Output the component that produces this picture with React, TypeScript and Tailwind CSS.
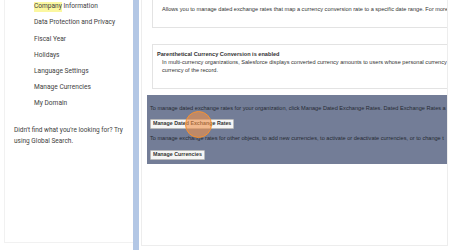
import React from "react"

const items = [
  "Company Information",
  "Data Protection and Privacy",
  "Fiscal Year",
  "Holidays",
  "Language Settings",
  "Manage Currencies",
  "My Domain",
]

function Sidebar() {
  return (
    <div className="w-[133px] h-full pl-[4px] pt-0 pb-[6px] bg-white">
      <div className="h-full bg-white border-l border-b border-[#f1f1f1] font-['Roboto',sans-serif] text-[#3e3e3e]">
        <div className="-mt-[1px] pl-[29px]">
          {items.map((it, i) => (
            <div key={it} className="h-[16.2px] flex items-center text-[6.6px] whitespace-nowrap">
              {i === 0 ? (
                <>
                  <span className="bg-[#fbf7a0]">Company</span>
                  <span>&nbsp;Information</span>
                </>
              ) : (
                it
              )}
            </div>
          ))}
        </div>
        <p className="mt-[13px] pl-[9px] pr-[4px] text-[6.5px] leading-[11px]">
          Didn't find what you're looking for? Try using Global Search.
        </p>
      </div>
    </div>
  )
}

function Btn({ children }: { children: React.ReactNode }) {
  return (
    <div className="inline-flex h-[10px] items-center px-[2px] bg-[#f6f6f6] border border-[#b9b9b9] rounded-[1px] text-[5.3px] font-bold text-[#333] whitespace-nowrap">
      {children}
    </div>
  )
}

function Main() {
  return (
    <div className="w-[307px] h-[246px] ml-[2px] bg-white border-r border-b border-l border-[#ededed] overflow-hidden font-['Liberation_Sans',Arial,sans-serif] relative">
      <div className="ml-[10px] h-[28px] border-l border-b border-[#e3e3e3] pl-[9px] pt-[5px] text-[5.6px] text-[#333] whitespace-nowrap">
        Allows you to manage dated exchange rates that map a currency conversion rate to a specific date range. For more
      </div>
      <div className="ml-[10px] mt-[16px] h-[45px] border-l border-t border-b border-[#e3e3e3] pl-[4px] pt-[5px] text-[5.6px] text-[#333] whitespace-nowrap">
        <div className="font-bold leading-[8px]">Parenthetical Currency Conversion is enabled</div>
        <div className="pl-[5px] leading-[8px]">
          In multi-currency organizations, Salesforce displays converted currency amounts to users whose personal currency
        </div>
        <div className="pl-[5px] leading-[8px]">currency of the record.</div>
      </div>
      <div className="ml-[5px] mt-[6px] h-[69px] bg-[#737d97] pl-[3px] pt-[10px] text-[5.6px] text-[#262a33] whitespace-nowrap">
        <div className="leading-[6px]">
          To manage dated exchange rates for your organization, click Manage Dated Exchange Rates. Dated Exchange Rates a
        </div>
        <div className="mt-[8px] flex">
          <Btn>Manage Dated Exchange Rates</Btn>
        </div>
        <div className="mt-[6px] leading-[6px]">
          To manage exchange rates for other objects, to add new currencies, to activate or deactivate currencies, or to change t
        </div>
        <div className="mt-[9px] flex">
          <Btn>Manage Currencies</Btn>
        </div>
      </div>
      <div className="absolute left-[43px] top-[111px] w-[27px] h-[27px] rounded-full border-[1.5px] border-[#f7912f] bg-[#f0914a]/60" />
    </div>
  )
}

export default function App() {
  return (
    <div className="w-[452px] h-[250px] bg-white flex overflow-hidden">
      <Sidebar />
      <div className="w-[6px] h-full bg-[#b3c7e5]" />
      <Main />
    </div>
  )
}
